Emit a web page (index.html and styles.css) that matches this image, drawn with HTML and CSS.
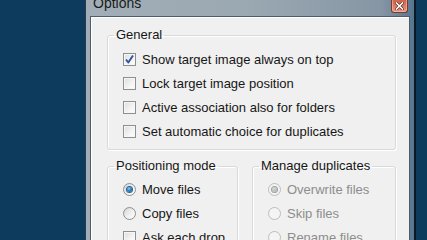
FILE: index.html
```html
<!DOCTYPE html>
<html lang="en">
<head>
  <meta charset="UTF-8">
  <title>Options</title>
  <link rel="stylesheet" href="styles.css">
</head>
<body>

<div class="desktop">
  <div class="window">
    <div class="titlebar">
      <span class="title">Options</span>
      <span class="close">
        <svg width="9" height="8" viewBox="0 0 9 8">
          <path d="M1.5 1 L7.5 7 M7.5 1 L1.5 7" stroke="#5a2a20" stroke-width="3" stroke-linecap="square"/>
          <path d="M1.5 1 L7.5 7 M7.5 1 L1.5 7" stroke="#ffffff" stroke-width="1.6" stroke-linecap="square"/>
        </svg>
      </span>
    </div>

    <div class="client">
      <fieldset class="group">
        <legend>General</legend>
        <div class="row">
          <span class="box checked">
            <svg width="11" height="11" viewBox="0 0 11 11">
              <path d="M2 5.5 L4.3 8.5 L9 1.5" fill="none" stroke="#3152a0" stroke-width="1.9" stroke-linejoin="round"/>
            </svg>
          </span>
          <span>Show target image always on top</span>
        </div>
        <div class="row"><span class="box"></span><span>Lock target image position</span></div>
        <div class="row"><span class="box"></span><span>Active association also for folders</span></div>
        <div class="row"><span class="box"></span><span>Set automatic choice for duplicates</span></div>
      </fieldset>

      <div class="group-row">
        <fieldset class="group positioning">
          <legend>Positioning mode</legend>
          <div class="row"><span class="radio selected"></span><span>Move files</span></div>
          <div class="row"><span class="radio"></span><span>Copy files</span></div>
          <div class="row"><span class="box"></span><span>Ask each drop</span></div>
        </fieldset>

        <fieldset class="group duplicates">
          <legend>Manage duplicates</legend>
          <div class="row disabled"><span class="radio selected"></span><span>Overwrite files</span></div>
          <div class="row disabled"><span class="radio"></span><span>Skip files</span></div>
          <div class="row disabled"><span class="radio"></span><span>Rename files</span></div>
        </fieldset>
      </div>
    </div>
  </div>
</div>

</body>
</html>
```

FILE: styles.css
```css
body {
  margin: 0;
  width: 427px;
  height: 240px;
  overflow: hidden;
  background: #0d3b5d;
  font-family: 'Liberation Sans', Arial, sans-serif;
  font-size: 13px;
  color: #161616;
}

.desktop {
  display: flex;
  padding-left: 85px;
}

.window {
  width: 331px;
  box-sizing: border-box;
  margin-top: -8px;
  padding: 0 4px 0 4px;
  border-left: 1px solid #2a3b49;
  border-right: 2px solid #0b1924;
  background: linear-gradient(90deg, #a2aeb7 0%, #9aa8b2 50%, #8696a4 90%, #587590 100%);
}

.titlebar {
  height: 24px;
  display: flex;
  align-items: flex-end;
  justify-content: space-between;
}

.title {
  padding: 0 0 5px 3px;
  line-height: 16px;
  font-size: 14px;
  color: #1a1a1a;
}

.close {
  width: 17px;
  height: 16px;
  margin: 0 2px 3px 0;
  box-sizing: border-box;
  border: 1px solid #7a3a2c;
  border-top: none;
  border-radius: 0 0 3px 3px;
  background: linear-gradient(180deg, #c85a44 0%, #d8735c 50%, #e79a80 100%);
  box-shadow: inset 0 0 0 1px rgba(255, 200, 180, 0.5);
  display: flex;
  align-items: center;
  justify-content: center;
  padding-top: 2px;
}

.client {
  height: 260px;
  box-sizing: border-box;
  border: 1px solid #4c5c6a;
  background: #f0f0f0;
  box-shadow: inset 1px 1px 0 #ffffff;
  padding: 11px 13px 0 16px;
}

.group {
  margin: 0;
  min-width: 0;
  padding: 5px 6px 6px 6px;
  border: 1px solid #d5dadd;
  border-radius: 3px;
  box-shadow: inset 1px 1px 0 #ffffff, 1px 1px 0 #ffffff;
}

.group legend {
  padding: 0 2px;
  line-height: 14px;
  color: #161616;
}

.group-row {
  display: flex;
  gap: 14px;
  margin-top: 9px;
}

.positioning {
  width: 131px;
  box-sizing: border-box;
  padding-top: 4px;
}

.duplicates {
  flex: 1;
  padding-top: 4px;
}

.row {
  display: flex;
  align-items: center;
  gap: 6px;
  height: 24px;
  margin-left: 9px;
  white-space: nowrap;
}

.box {
  width: 13px;
  height: 13px;
  box-sizing: border-box;
  flex: none;
  border: 1px solid #8f8f8f;
  background: linear-gradient(135deg, #dcdcdc 0%, #f4f4f4 60%, #ffffff 100%);
  box-shadow: inset 0 0 0 1px #f6f6f6;
  display: flex;
  align-items: center;
  justify-content: center;
}

.radio {
  width: 13px;
  height: 13px;
  box-sizing: border-box;
  flex: none;
  border: 1px solid #8f8f8f;
  border-radius: 50%;
  background: linear-gradient(135deg, #d6d6d6 0%, #f2f2f2 60%, #ffffff 100%);
  display: flex;
  align-items: center;
  justify-content: center;
}

.radio.selected::after {
  content: "";
  width: 5px;
  height: 5px;
  border-radius: 50%;
  background: radial-gradient(circle at 40% 35%, #8fd0f5 0%, #2a7fc0 45%, #0d4a86 100%);
  box-shadow: 0 0 0 1px #2c5f8e;
}

.disabled {
  color: #8d8d8d;
}

.disabled .radio {
  border-color: #bcbcbc;
  background: #f4f4f4;
}

.disabled .radio.selected::after {
  background: radial-gradient(circle at 40% 35%, #d8d8d8 0%, #a8a8a8 100%);
  box-shadow: 0 0 0 1px #a0a0a0;
}
```
